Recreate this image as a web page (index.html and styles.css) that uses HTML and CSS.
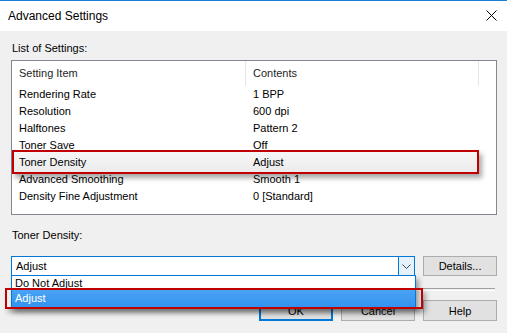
FILE: index.html
```html
<!DOCTYPE html>
<html>
<head>
<meta charset="utf-8">
<link rel="stylesheet" href="styles.css">
</head>
<body>
<div class="window">
  <div class="titlebar">
    <span class="title">Advanced Settings</span>
    <svg class="close" width="11" height="11" viewBox="0 0 11 11"><path d="M0.5 0.5 L10.5 10.5 M10.5 0.5 L0.5 10.5" stroke="#000" stroke-width="1" fill="none"/></svg>
  </div>
  <div class="content">
    <div class="label first">List of Settings:</div>
    <div class="listbox">
      <div class="lv-header">
        <div class="hcell">Setting Item</div>
        <div class="hcell">Contents</div>
      </div>
      <div class="lv-row"><div class="cell">Rendering Rate</div><div class="cell">1 BPP</div></div>
      <div class="lv-row"><div class="cell">Resolution</div><div class="cell">600 dpi</div></div>
      <div class="lv-row"><div class="cell">Halftones</div><div class="cell">Pattern 2</div></div>
      <div class="lv-row"><div class="cell">Toner Save</div><div class="cell">Off</div></div>
      <div class="lv-row marked"><div class="cell">Toner Density</div><div class="cell">Adjust</div></div>
      <div class="lv-row"><div class="cell">Advanced Smoothing</div><div class="cell">Smooth 1</div></div>
      <div class="lv-row"><div class="cell">Density Fine Adjustment</div><div class="cell">0 [Standard]</div></div>
    </div>
    <div class="label second">Toner Density:</div>
    <div class="combo-row">
      <div class="combo">
        <span class="combo-text">Adjust</span>
        <span class="combo-btn"><svg width="9" height="5" viewBox="0 0 9 5"><path d="M0.5 0.5 L4.5 4.5 L8.5 0.5" stroke="#444" stroke-width="1" fill="none"/></svg></span>
        <div class="droplist">
          <div class="opt">Do Not Adjust</div>
          <div class="opt sel">Adjust</div>
          <div class="mark2"></div>
        </div>
      </div>
      <button class="btn">Details...</button>
    </div>
    <div class="separator"></div>
    <div class="buttons">
      <button class="btn default">OK</button>
      <button class="btn">Cancel</button>
      <button class="btn">Help</button>
    </div>
  </div>
</div>
</body>
</html>
```
FILE: styles.css
```css
html, body {
  margin: 0;
  padding: 0;
}
body {
  background: #f0f0f0;
  font-family: "Liberation Sans", Arial, sans-serif;
  font-size: 11px;
  color: #000;
  width: 507px;
  height: 333px;
  overflow: hidden;
}
.window {
  border-top: 1px solid #1a7fd4;
}
.titlebar {
  height: 30px;
  background: #fff;
  display: flex;
  align-items: center;
  justify-content: space-between;
  padding: 0 10px 0 8px;
}
.title {
  font-size: 12px;
  color: #000;
  padding-bottom: 1px;
}
.close {
  display: block;
  margin-top: -1px;
}
.content {
  padding: 0 10px 0 11px;
}
.label {
  line-height: 14px;
  height: 14px;
}
.label.first {
  padding-top: 10px;
  padding-left: 1px;
}
.label.second {
  margin-top: 13px;
  padding-left: 1px;
}
.listbox {
  margin-top: 5px;
  height: 153px;
  border: 1px solid #828790;
  background: #fff;
}
.lv-header {
  display: grid;
  grid-template-columns: 234px 233px;
  height: 25px;
}
.hcell {
  border-right: 1px solid #e5e5e5;
  padding-left: 7px;
  line-height: 25px;
  color: #1e1e1e;
}
.lv-row {
  display: grid;
  grid-template-columns: 234px 233px;
  height: 17px;
  line-height: 17px;
}
.cell {
  padding-left: 7px;
  white-space: nowrap;
  position: relative;
  z-index: 1;
}
.lv-row.marked {
  position: relative;
}
.lv-row.marked::before {
  content: "";
  position: absolute;
  left: 0;
  right: 17px;
  top: -4px;
  bottom: -3px;
  border: 2px solid #c00000;
  background: linear-gradient(#f6f6f6, #ebebeb);
  box-shadow: 3px 4px 5px rgba(0, 0, 0, 0.35);
  z-index: 0;
}
.combo-row {
  margin-top: 14px;
  display: flex;
  gap: 8px;
  height: 20px;
}
.combo {
  position: relative;
  width: 405px;
  height: 20px;
  box-sizing: border-box;
  border: 1px solid #0078d7;
  background: #fff;
  display: flex;
  align-items: center;
  justify-content: space-between;
}
.combo-text {
  padding-left: 4px;
}
.combo-btn {
  width: 16px;
  height: 18px;
  box-sizing: border-box;
  border-left: 1px solid #0078d7;
  background: #e5f1fb;
  display: flex;
  align-items: center;
  justify-content: center;
}
.droplist {
  position: absolute;
  left: -1px;
  top: 18px;
  width: 405px;
  height: 33px;
  box-sizing: border-box;
  border: 1px solid #0078d7;
  background: #fff;
  box-shadow: 3px 4px 5px rgba(0, 0, 0, 0.35);
  z-index: 5;
}
.opt {
  height: 14px;
  line-height: 14px;
  padding-left: 3px;
}
.opt.sel {
  height: 17px;
  line-height: 17px;
  background: linear-gradient(#4aa3f5, #3393ee);
  color: #fff;
}
.mark2 {
  position: absolute;
  left: -7px;
  top: 12px;
  width: 418px;
  height: 21px;
  box-sizing: border-box;
  border: 2px solid #c00000;
  box-shadow: 3px 4px 5px rgba(0, 0, 0, 0.3);
}
.btn {
  width: 74px;
  height: 20px;
  box-sizing: border-box;
  background: #e1e1e1;
  border: 1px solid #adadad;
  font-family: "Liberation Sans", Arial, sans-serif;
  font-size: 11px;
  color: #000;
  padding: 0;
  margin: 0;
}
.btn.default {
  border: 2px solid #0078d7;
}
.separator {
  margin-top: 12px;
  height: 1px;
  border-top: 1px solid #a0a0a0;
  border-bottom: 1px solid #fff;
  margin-right: 2px;
}
.buttons {
  margin-top: 9px;
  display: flex;
  justify-content: flex-end;
  gap: 8px;
}
.buttons .btn {
  height: 21px;
}
```
